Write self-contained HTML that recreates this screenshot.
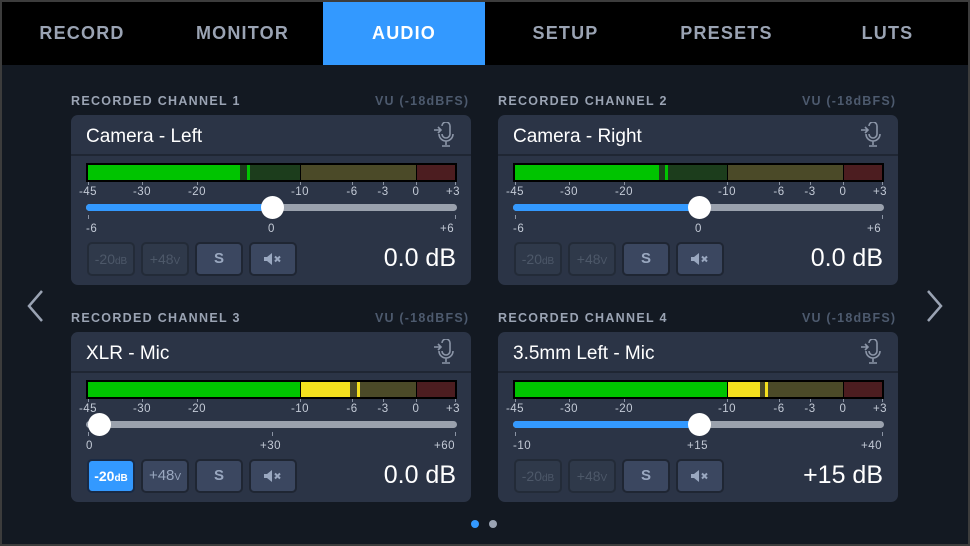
<!DOCTYPE html>
<html><head><meta charset="utf-8"><style>
*{margin:0;padding:0;box-sizing:border-box}
body{width:970px;height:546px;background:#3c3c3c;font-family:"Liberation Sans",sans-serif;overflow:hidden;position:relative}
#scr{position:absolute;left:2px;top:2px;width:966px;height:542px;background:#131922;overflow:hidden}
.tabs{position:absolute;left:0;top:0;width:966px;height:63px;background:#000}
.tab{position:absolute;top:0;height:63px;line-height:63px;text-align:center;color:#9aa3b3;font-weight:bold;font-size:18px;letter-spacing:1.2px}
.tab.on{background:#3399ff;color:#fff}
.lab{position:absolute;font-size:12.5px;font-weight:bold;letter-spacing:1.3px;color:#9aa3b3}
.vu{position:absolute;font-size:12.5px;font-weight:bold;letter-spacing:1.2px;color:#4d5a6e}
.card{position:absolute;width:400px;height:170px;background:#2b3446;border-radius:7px}
.card .t{position:absolute;left:15px;top:11px;font-size:19px;color:#fff}
.card .dv{position:absolute;left:0;top:39px;width:400px;height:2px;background:#1f2633}
.mic{position:absolute;left:362px;top:7px}
.m{position:absolute;left:15px;top:48px;width:371px;height:19px;background:#000}
.s{position:absolute;top:2px;height:15px}
.tk{position:absolute;top:67px;width:1px;height:3px;background:#8a93a3}
.tl{position:absolute;top:71px;width:40px;margin-left:-20px;text-align:center;font-size:11.5px;color:#c3cad6;letter-spacing:.5px}
.tr{position:absolute;left:15px;top:89px;width:371px;height:7px;border-radius:4px;background:#9aa1ad}
.tb{position:absolute;left:15px;top:89px;height:7px;border-radius:4px;background:#3399ff}
.kn{position:absolute;top:81px;width:23px;height:23px;margin-left:-11px;border-radius:50%;background:#fff}
.rk{position:absolute;top:100px;width:1px;height:4px;background:#8a93a3}
.rl{position:absolute;top:108px;font-size:11.5px;color:#c3cad6;letter-spacing:.5px}
.b{position:absolute;top:127px;width:48px;height:34px;border-radius:5px;background:#2f394a;border:2px solid #232b38;color:#4d5869;text-align:center;line-height:30px;font-size:14px}
.b small{font-size:10px}
.b.en{background:#3b4760;color:#9aa8c0;font-weight:bold;font-size:15px;border-color:#1f2633}
.b.bl{background:#3399ff;color:#fff;border-color:#1a2a44;font-weight:bold}
.b svg{margin-top:9px}
.val{position:absolute;right:15px;top:129px;font-size:25px;color:#fff}
</style></head><body><div id="scr">
<div class="tabs">
<div class="tab" style="left:0;width:160px">RECORD</div>
<div class="tab" style="left:160px;width:161px">MONITOR</div>
<div class="tab on" style="left:321px;width:162px">AUDIO</div>
<div class="tab" style="left:483px;width:161px">SETUP</div>
<div class="tab" style="left:644px;width:161px">PRESETS</div>
<div class="tab" style="left:805px;width:161px">LUTS</div>
</div>

<svg style="position:absolute;left:24px;top:286px" width="20" height="36"><path d="M16 3 L3 18 L16 33" stroke="#9aa3b3" stroke-width="2.5" fill="none"/></svg>
<svg style="position:absolute;left:922px;top:286px" width="20" height="36"><path d="M4 3 L17 18 L4 33" stroke="#9aa3b3" stroke-width="2.5" fill="none"/></svg>
<div style="position:absolute;left:469px;top:518px;width:8px;height:8px;border-radius:50%;background:#3399ff"></div>
<div style="position:absolute;left:487px;top:518px;width:8px;height:8px;border-radius:50%;background:#9aa3b3"></div>

<div class="lab" style="left:69px;top:92px">RECORDED CHANNEL 1</div><div class="vu" style="left:373px;top:92px">VU (-18dBFS)</div>
<div class="lab" style="left:496px;top:92px">RECORDED CHANNEL 2</div><div class="vu" style="left:800px;top:92px">VU (-18dBFS)</div>
<div class="lab" style="left:69px;top:309px">RECORDED CHANNEL 3</div><div class="vu" style="left:373px;top:309px">VU (-18dBFS)</div>
<div class="lab" style="left:496px;top:309px">RECORDED CHANNEL 4</div><div class="vu" style="left:800px;top:309px">VU (-18dBFS)</div>

<!-- card 1 -->
<div class="card" style="left:69px;top:113px">
<div class="t">Camera - Left</div><div class="dv"></div>
<svg class="mic" width="22" height="26" viewBox="0 0 22 26" fill="none" stroke="#8c96a8" stroke-width="1.6"><path d="M1 8h7M5 5l3 3-3 3"/><path d="M9 4a4 4 0 0 1 8 0v8a4 4 0 0 1-8 0"/><path d="M6 12a7 7 0 0 0 14 0M13 19v4M9 24h8"/></svg>
<div class="m"><div class="s" style="left:2px;width:152px;background:#00c400"></div><div class="s" style="left:154px;width:60px;background:#1c3d1c"></div><div class="s" style="left:161px;width:3px;background:#00c400"></div><div class="s" style="left:215px;width:115px;background:#4b4a28"></div><div class="s" style="left:331px;width:38px;background:#4c1d20"></div></div>
<div class="tk" style="left:17px"></div><div class="tk" style="left:71px"></div><div class="tk" style="left:126px"></div><div class="tk" style="left:229px"></div><div class="tk" style="left:281px"></div><div class="tk" style="left:312px"></div><div class="tk" style="left:345px"></div><div class="tk" style="left:384px"></div>
<div class="tl" style="left:17px">-45</div><div class="tl" style="left:71px">-30</div><div class="tl" style="left:126px">-20</div><div class="tl" style="left:229px">-10</div><div class="tl" style="left:281px">-6</div><div class="tl" style="left:312px">-3</div><div class="tl" style="left:345px">0</div><div class="tl" style="left:382px">+3</div>
<div class="tr"></div><div class="tb" style="width:186px"></div><div class="kn" style="left:201px"></div>
<div class="rk" style="left:17px"></div><div class="rk" style="left:384px"></div>
<div class="rl" style="left:15px">-6</div><div class="rl" style="left:197px">0</div><div class="rl" style="left:369px">+6</div>
<div class="b" style="left:16px">-20<small>dB</small></div><div class="b" style="left:70px">+48<small>V</small></div><div class="b en" style="left:124px">S</div><div class="b en" style="left:178px"><svg width="20" height="12" viewBox="0 0 20 12"><path d="M1 4h3l5-4v12l-5-4H1z" fill="#9aa8c0"/><path d="M12 3.5l5 5M17 3.5l-5 5" stroke="#9aa8c0" stroke-width="2"/></svg></div>
<div class="val">0.0 dB</div>
</div>

<!-- card 2 -->
<div class="card" style="left:496px;top:113px">
<div class="t">Camera - Right</div><div class="dv"></div>
<svg class="mic" width="22" height="26" viewBox="0 0 22 26" fill="none" stroke="#8c96a8" stroke-width="1.6"><path d="M1 8h7M5 5l3 3-3 3"/><path d="M9 4a4 4 0 0 1 8 0v8a4 4 0 0 1-8 0"/><path d="M6 12a7 7 0 0 0 14 0M13 19v4M9 24h8"/></svg>
<div class="m"><div class="s" style="left:2px;width:144px;background:#00c400"></div><div class="s" style="left:146px;width:68px;background:#1c3d1c"></div><div class="s" style="left:152px;width:3px;background:#00c400"></div><div class="s" style="left:215px;width:115px;background:#4b4a28"></div><div class="s" style="left:331px;width:38px;background:#4c1d20"></div></div>
<div class="tk" style="left:17px"></div><div class="tk" style="left:71px"></div><div class="tk" style="left:126px"></div><div class="tk" style="left:229px"></div><div class="tk" style="left:281px"></div><div class="tk" style="left:312px"></div><div class="tk" style="left:345px"></div><div class="tk" style="left:384px"></div>
<div class="tl" style="left:17px">-45</div><div class="tl" style="left:71px">-30</div><div class="tl" style="left:126px">-20</div><div class="tl" style="left:229px">-10</div><div class="tl" style="left:281px">-6</div><div class="tl" style="left:312px">-3</div><div class="tl" style="left:345px">0</div><div class="tl" style="left:382px">+3</div>
<div class="tr"></div><div class="tb" style="width:186px"></div><div class="kn" style="left:201px"></div>
<div class="rk" style="left:17px"></div><div class="rk" style="left:384px"></div>
<div class="rl" style="left:15px">-6</div><div class="rl" style="left:197px">0</div><div class="rl" style="left:369px">+6</div>
<div class="b" style="left:16px">-20<small>dB</small></div><div class="b" style="left:70px">+48<small>V</small></div><div class="b en" style="left:124px">S</div><div class="b en" style="left:178px"><svg width="20" height="12" viewBox="0 0 20 12"><path d="M1 4h3l5-4v12l-5-4H1z" fill="#9aa8c0"/><path d="M12 3.5l5 5M17 3.5l-5 5" stroke="#9aa8c0" stroke-width="2"/></svg></div>
<div class="val">0.0 dB</div>
</div>

<!-- card 3 -->
<div class="card" style="left:69px;top:330px">
<div class="t">XLR - Mic</div><div class="dv"></div>
<svg class="mic" width="22" height="26" viewBox="0 0 22 26" fill="none" stroke="#8c96a8" stroke-width="1.6"><path d="M1 8h7M5 5l3 3-3 3"/><path d="M9 4a4 4 0 0 1 8 0v8a4 4 0 0 1-8 0"/><path d="M6 12a7 7 0 0 0 14 0M13 19v4M9 24h8"/></svg>
<div class="m"><div class="s" style="left:2px;width:212px;background:#00c400"></div><div class="s" style="left:215px;width:115px;background:#4b4a28"></div><div class="s" style="left:215px;width:49px;background:#f4e01e"></div><div class="s" style="left:271px;width:3px;background:#f4e01e"></div><div class="s" style="left:331px;width:38px;background:#4c1d20"></div></div>
<div class="tk" style="left:17px"></div><div class="tk" style="left:71px"></div><div class="tk" style="left:126px"></div><div class="tk" style="left:229px"></div><div class="tk" style="left:281px"></div><div class="tk" style="left:312px"></div><div class="tk" style="left:345px"></div><div class="tk" style="left:384px"></div>
<div class="tl" style="left:17px">-45</div><div class="tl" style="left:71px">-30</div><div class="tl" style="left:126px">-20</div><div class="tl" style="left:229px">-10</div><div class="tl" style="left:281px">-6</div><div class="tl" style="left:312px">-3</div><div class="tl" style="left:345px">0</div><div class="tl" style="left:382px">+3</div>
<div class="tr"></div><div class="kn" style="left:28px"></div>
<div class="rk" style="left:17px"></div><div class="rk" style="left:201px"></div><div class="rk" style="left:384px"></div>
<div class="rl" style="left:15px">0</div><div class="rl" style="left:189px">+30</div><div class="rl" style="left:363px">+60</div>
<div class="b bl" style="left:16px">-20<small>dB</small></div><div class="b en" style="left:70px;font-weight:normal">+48<small>V</small></div><div class="b en" style="left:124px">S</div><div class="b en" style="left:178px"><svg width="20" height="12" viewBox="0 0 20 12"><path d="M1 4h3l5-4v12l-5-4H1z" fill="#9aa8c0"/><path d="M12 3.5l5 5M17 3.5l-5 5" stroke="#9aa8c0" stroke-width="2"/></svg></div>
<div class="val">0.0 dB</div>
</div>

<!-- card 4 -->
<div class="card" style="left:496px;top:330px">
<div class="t">3.5mm Left - Mic</div><div class="dv"></div>
<svg class="mic" width="22" height="26" viewBox="0 0 22 26" fill="none" stroke="#8c96a8" stroke-width="1.6"><path d="M1 8h7M5 5l3 3-3 3"/><path d="M9 4a4 4 0 0 1 8 0v8a4 4 0 0 1-8 0"/><path d="M6 12a7 7 0 0 0 14 0M13 19v4M9 24h8"/></svg>
<div class="m"><div class="s" style="left:2px;width:212px;background:#00c400"></div><div class="s" style="left:215px;width:115px;background:#4b4a28"></div><div class="s" style="left:215px;width:32px;background:#f4e01e"></div><div class="s" style="left:252px;width:3px;background:#f4e01e"></div><div class="s" style="left:331px;width:38px;background:#4c1d20"></div></div>
<div class="tk" style="left:17px"></div><div class="tk" style="left:71px"></div><div class="tk" style="left:126px"></div><div class="tk" style="left:229px"></div><div class="tk" style="left:281px"></div><div class="tk" style="left:312px"></div><div class="tk" style="left:345px"></div><div class="tk" style="left:384px"></div>
<div class="tl" style="left:17px">-45</div><div class="tl" style="left:71px">-30</div><div class="tl" style="left:126px">-20</div><div class="tl" style="left:229px">-10</div><div class="tl" style="left:281px">-6</div><div class="tl" style="left:312px">-3</div><div class="tl" style="left:345px">0</div><div class="tl" style="left:382px">+3</div>
<div class="tr"></div><div class="tb" style="width:186px"></div><div class="kn" style="left:201px"></div>
<div class="rk" style="left:17px"></div><div class="rk" style="left:384px"></div>
<div class="rl" style="left:15px">-10</div><div class="rl" style="left:189px">+15</div><div class="rl" style="left:363px">+40</div>
<div class="b" style="left:16px">-20<small>dB</small></div><div class="b" style="left:70px">+48<small>V</small></div><div class="b en" style="left:124px">S</div><div class="b en" style="left:178px"><svg width="20" height="12" viewBox="0 0 20 12"><path d="M1 4h3l5-4v12l-5-4H1z" fill="#9aa8c0"/><path d="M12 3.5l5 5M17 3.5l-5 5" stroke="#9aa8c0" stroke-width="2"/></svg></div>
<div class="val">+15 dB</div>
</div>

</div></body></html>
